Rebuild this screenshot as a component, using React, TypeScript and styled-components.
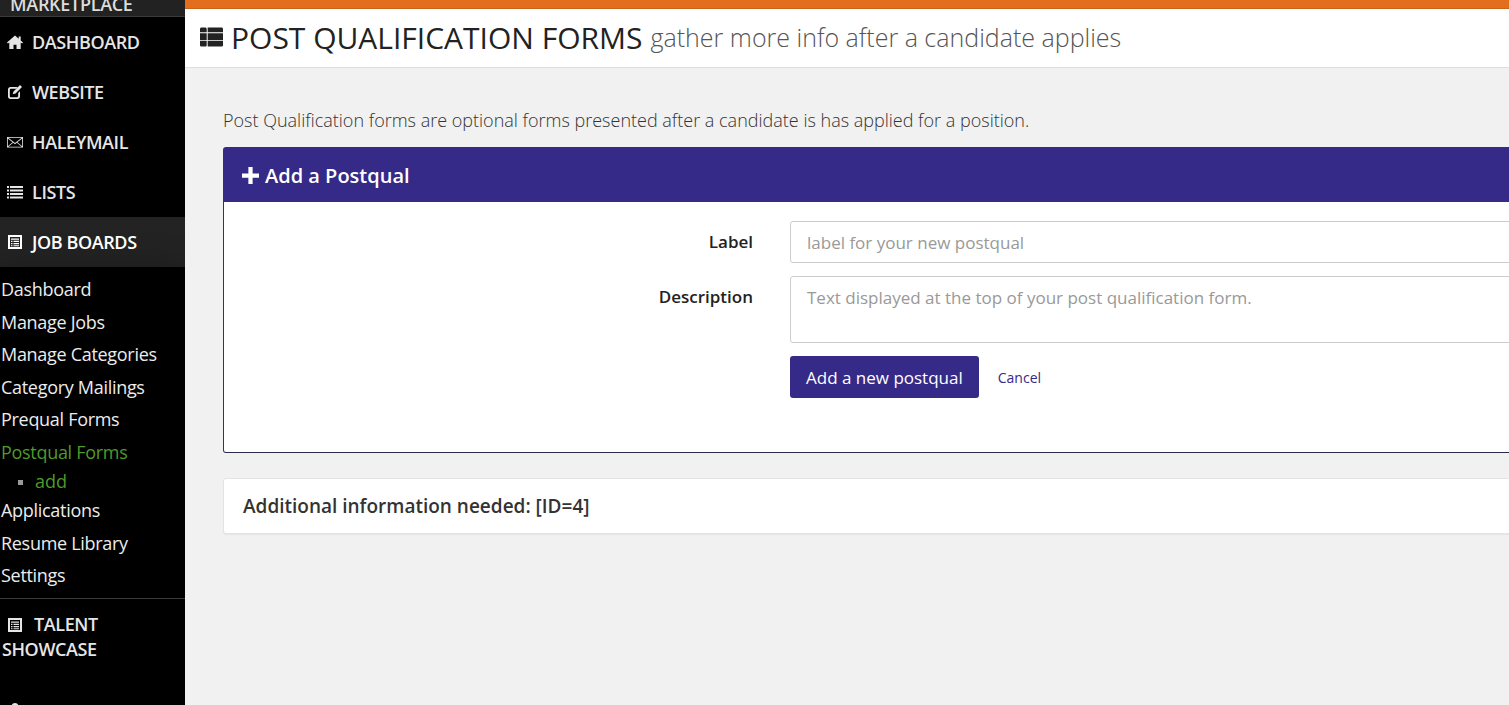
import React from "react"
import styled, { createGlobalStyle } from "styled-components"

const GlobalStyle = createGlobalStyle`
    html, body {
        margin:0;
        height:100%;
        overflow:hidden;
        background:#f1f1f1;
        font-family:"Open Sans", "Liberation Sans", sans-serif;
    }
    #root { height:100%; }
    * { box-sizing:border-box; }
`

type IconName = "home" | "edit" | "mail" | "list" | "listAlt" | "user"

const NavIcon = ({name}:{name:IconName}) => {
    return (
        <IconSvg viewBox={"0 0 16 16"} fill={"currentColor"}>
            {name === "home" && <path d="M8 1.5 0 8.6l.9 1L2.3 8.4V15h4.2v-4.2h3V15h4.2V8.4l1.4 1.2.9-1-2.3-2V2.5h-2v2.3z"/>}
            {name === "edit" && <path fillRule="evenodd" d="M3.5 3h7.2L9 4.8H3.7c-.5 0-.9.4-.9.9v6.6c0 .5.4.9.9.9h6.6c.5 0 .9-.4.9-.9V9l1.8-1.8v5.3c0 1.4-1.1 2.5-2.5 2.5h-7C2.1 15 1 13.9 1 12.5v-7C1 4.100 2.100 3 3.500 3zM13 1l2 2-6.500 6.500-2.800.8.800-2.800z"/>}
            {name === "mail" && <path fillRule="evenodd" d="M0 3h16v10.500H0zM1.300 3.700 8 9l6.700-5.300zM.8 4.500v7.800L5.600 8.300zm14.400 0-4.800 3.800 4.800 4zM6.200 8.800l-4.900 4h13.400l-4.900-4L8 10.200z"/>}
            {name === "list" && <path d="M0 2h2v2H0zm3 0h13v2H3zM0 5.500h2v2H0zm3 0h13v2H3zM0 9h2v2H0zm3 0h13v2H3zm-3 3.500h2v2H0zm3 0h13v2H3z"/>}
            {name === "listAlt" && <path fillRule="evenodd" d="M1 1h14v14H1zm2 2v10h10V3zm1 1.500h8v1.300H4zm0 2.200h1.500V8H4zm2.500 0H12V8H6.500zM4 9h1.500v1.300H4zm2.500 0H12v1.300H6.500zM4 11.200h1.500v1H4zm2.500 0H12v1H6.500z"/>}
            {name === "user" && <path d="M8 0c2.300 0 3.600 1.700 3.600 4S10.400 9 8 9 4.400 6.300 4.400 4 5.700 0 8 0zM5.700 9.200C6.400 10 7.200 10.400 8 10.400s1.600-.4 2.300-1.200c2.500.8 4.700 2 4.700 3.800V16H1v-3c0-1.800 2.200-3 4.700-3.800z"/>}
        </IconSvg>
    )
}

const subItems = ["Dashboard", "Manage Jobs", "Manage Categories", "Category Mailings", "Prequal Forms"]

const App = () => {
    return (
        <Page>
            <GlobalStyle/>
            <Sidebar>
                <TopItem>MARKETPLACE</TopItem>
                <NavItem><NavIcon name={"home"}/>DASHBOARD</NavItem>
                <NavItem><NavIcon name={"edit"}/>WEBSITE</NavItem>
                <NavItem><NavIcon name={"mail"}/>HALEYMAIL</NavItem>
                <NavItem><NavIcon name={"list"}/>LISTS</NavItem>
                <NavItem $active><NavIcon name={"listAlt"}/>JOB BOARDS</NavItem>
                <SubMenu>
                    {subItems.map((item) => <SubItem key={item}>{item}</SubItem>)}
                    <SubItem $current>Postqual Forms</SubItem>
                    <NestedList><NestedItem>add</NestedItem></NestedList>
                    <SubItem>Applications</SubItem>
                    <SubItem>Resume Library</SubItem>
                    <SubItem>Settings</SubItem>
                </SubMenu>
                <WrapItem><NavIcon name={"listAlt"}/>TALENT SHOWCASE</WrapItem>
                <NavItem><NavIcon name={"user"}/>TEAM MEMBERS</NavItem>
            </Sidebar>
            <Main>
                <OrangeBar/>
                <Header>
                    <TitleIcon viewBox={"0 0 24 20"} fill={"currentColor"}>
                        <path d="M0 1.500C0 .700.700 0 1.500 0h4C6.300 0 7 .700 7 1.500V5H0zM8 0h14.500c.8 0 1.500.700 1.500 1.500V5H8zM0 6h7v7H0zm8 0h16v7H8zM0 14h7v4.500C7 19.300 6.300 20 5.500 20h-4C.700 20 0 19.300 0 18.500zm8 0h16v4.500c0 .8-.7 1.500-1.500 1.500H8z"/>
                    </TitleIcon>
                    <Title>POST QUALIFICATION FORMS</Title>
                    <Subtitle>gather more info after a candidate applies</Subtitle>
                </Header>
                <Content>
                    <Intro>Post Qualification forms are optional forms presented after a candidate is has applied for a position.</Intro>
                    <FormPanel>
                        <PanelHeading>
                            <PlusIcon viewBox={"0 0 16 16"} fill={"currentColor"}>
                                <path d="M6 0h4v6h6v4h-6v6H6v-6H0V6h6z"/>
                            </PlusIcon>
                            Add a Postqual
                        </PanelHeading>
                        <PanelBody>
                            <FormRow>
                                <FieldLabel>Label</FieldLabel>
                                <TextInput placeholder={"label for your new postqual"}/>
                            </FormRow>
                            <FormRow>
                                <FieldLabel>Description</FieldLabel>
                                <TextArea placeholder={"Text displayed at the top of your post qualification form."}/>
                            </FormRow>
                            <Actions>
                                <SubmitButton>Add a new postqual</SubmitButton>
                                <CancelLink>Cancel</CancelLink>
                            </Actions>
                        </PanelBody>
                    </FormPanel>
                    <ListCard>Additional information needed: [ID=4]</ListCard>
                </Content>
            </Main>
        </Page>
    )
}

const Page = styled.div`
    display:flex;
    width:1700px;
    height:705px;
    overflow:hidden;
`

const Sidebar = styled.nav`
    flex:0 0 185px;
    height:705px;
    overflow:hidden;
    background:#000;
    color:#e6e6e6;
    position:relative;
    z-index:1;
`

const TopItem = styled.div`
    height:17px;
    display:flex;
    align-items:flex-end;
    padding:0 0 7px 10px;
    background:#222;
    border-bottom:1px solid #3a3a3a;
    font-size:18px;
    font-weight:600;
    line-height:10px;
    letter-spacing:-0.3px;
    overflow:hidden;
    color:#ddd;
`

const NavItem = styled.div<{$active?:boolean}>`
    height:50px;
    display:flex;
    align-items:center;
    padding-left:7px;
    gap:9px;
    background:${props => props.$active ? "#232323" : "#000"};
    color:${props => props.$active ? "#fff" : "#e6e6e6"};
    font-size:18px;
    font-weight:600;
    letter-spacing:-0.4px;
    white-space:nowrap;
`

const IconSvg = styled.svg`
    width:16px;
    height:16px;
    flex:none;
`

const SubMenu = styled.div`
    padding:6px 0 6px;
    box-shadow:0 0 30px rgba(0,0,0,0.25);
    border-bottom:1px solid #3a3a3a;
`

const SubItem = styled.div<{$current?:boolean}>`
    height:32.5px;
    line-height:32.5px;
    padding-left:1px;
    font-size:18px;
    letter-spacing:-0.3px;
    color:${props => props.$current ? "#4f9a2b" : "#ececec"};
    white-space:nowrap;
`

const NestedList = styled.ul`
    margin:0;
    padding:0 0 0 35px;
    list-style:square;
    color:#999;
`

const NestedItem = styled.li`
    height:26px;
    line-height:26px;
    font-size:18px;
    color:#4f9a2b;
    &::marker { color:#999; font-size:14px; }
`

const WrapItem = styled.div`
    padding:13px 20px 24px 2px;
    font-size:18px;
    font-weight:600;
    line-height:25px;
    letter-spacing:-0.4px;
    color:#e6e6e6;
    svg { margin:0 11px 0 5px; vertical-align:-2px; }
`

const Main = styled.main`
    flex:1;
    min-width:0;
    display:flex;
    flex-direction:column;
`

const OrangeBar = styled.div`
    height:9px;
    background:#e36f1e;
    border-bottom:1px solid #c9621a;
`

const Header = styled.header`
    height:59px;
    display:flex;
    align-items:center;
    padding:0 0 2px 15px;
    background:#fff;
    border-bottom:1px solid #dedede;
    color:#222;
`

const TitleIcon = styled.svg`
    width:23px;
    height:20px;
    margin-right:8px;
    flex:none;
`

const Title = styled.h1`
    margin:0 8px 0 0;
    font-size:30px;
    font-weight:500;
    letter-spacing:0;
    white-space:nowrap;
`

const Subtitle = styled.span`
    font-size:25px;
    font-weight:300;
    color:#555;
    white-space:nowrap;
`

const Content = styled.div`
    padding:37px 0 0 38px;
`

const Intro = styled.p`
    margin:0 0 12px;
    font-size:18px;
    font-weight:300;
    line-height:30px;
    color:#333;
`

const FormPanel = styled.section`
    border:1px solid #362a85;
    border-bottom-color:#2b2b4e;
    border-radius:3px;
    background:#fff;
`

const PanelHeading = styled.div`
    height:54px;
    display:flex;
    align-items:center;
    gap:6px;
    padding-left:18px;
    background:#352a87;
    color:#fff;
    font-size:20px;
    font-weight:600;
`

const PlusIcon = styled.svg`
    width:17px;
    height:17px;
`

const PanelBody = styled.div`
    height:250px;
    padding:19px 0 0;
`

const FormRow = styled.div`
    display:flex;
    align-items:flex-start;
    margin-bottom:13px;
`

const FieldLabel = styled.label`
    width:529px;
    padding-top:9px;
    text-align:right;
    font-size:17px;
    font-weight:600;
    line-height:24px;
    color:#222;
    flex:none;
`

const TextInput = styled.input`
    margin-left:37px;
    flex:1;
    height:42px;
    padding:0 16px;
    border:1px solid #ccc;
    border-radius:3px;
    font:inherit;
    font-size:17px;
    &::placeholder { color:#999; opacity:1; }
`

const TextArea = styled.textarea`
    margin-left:37px;
    flex:1;
    height:67px;
    padding:8px 16px;
    border:1px solid #ccc;
    border-radius:3px;
    font:inherit;
    font-size:17px;
    line-height:26px;
    resize:none;
    &::placeholder { color:#999; opacity:1; }
`

const Actions = styled.div`
    display:flex;
    align-items:center;
    gap:19px;
    margin-left:566px;
`

const SubmitButton = styled.button`
    height:42px;
    padding:0 16px;
    border:none;
    border-radius:3px;
    background:#352a87;
    color:#fff;
    font:inherit;
    font-size:17px;
`

const CancelLink = styled.a`
    font-size:14px;
    color:#352a87;
`

const ListCard = styled.div`
    height:56px;
    margin-top:25px;
    display:flex;
    align-items:center;
    padding-left:19px;
    background:#fff;
    border:1px solid #e4e4e4;
    border-radius:3px;
    box-shadow:0 1px 1px rgba(0,0,0,0.05);
    font-size:19px;
    font-weight:600;
    color:#333;
`

export default App
